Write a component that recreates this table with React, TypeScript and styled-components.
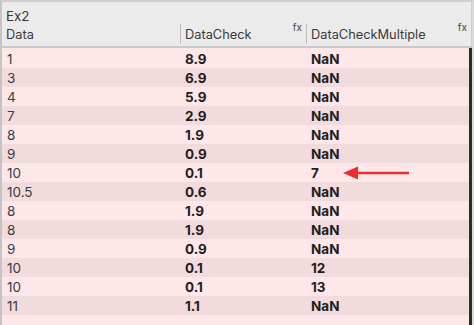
import { createGlobalStyle, styled } from 'styled-components';

const GlobalStyle = createGlobalStyle`
  body {
    margin: 0;
    background: #ffffff;
  }
`;

const rows: [string, string, string][] = [
  ['1', '8.9', 'NaN'],
  ['3', '6.9', 'NaN'],
  ['4', '5.9', 'NaN'],
  ['7', '2.9', 'NaN'],
  ['8', '1.9', 'NaN'],
  ['9', '0.9', 'NaN'],
  ['10', '0.1', '7'],
  ['10.5', '0.6', 'NaN'],
  ['8', '1.9', 'NaN'],
  ['8', '1.9', 'NaN'],
  ['9', '0.9', 'NaN'],
  ['10', '0.1', '12'],
  ['10', '0.1', '13'],
  ['11', '1.1', 'NaN'],
];

const App = () => {
  return (
    <>
      <GlobalStyle />
      <Frame>
        <Header>
          <TableTitle>Ex2</TableTitle>
          <HeaderRow>
            <HeadCell>
              <span>Data</span>
            </HeadCell>
            <HeadCell $divider>
              <span>DataCheck</span>
              <Fx>fx</Fx>
            </HeadCell>
            <HeadCell $divider>
              <span>DataCheckMultiple</span>
              <Fx>fx</Fx>
            </HeadCell>
          </HeaderRow>
        </Header>
        <Body>
          {rows.map((r, i) => (
            <Row key={i} $odd={i % 2 === 1}>
              <Cell>{r[0]}</Cell>
              <Cell $bold>{r[1]}</Cell>
              <Cell $bold>
                {r[2]}
                {i === 6 && (
                  <Arrow width='66' height='14' viewBox='0 0 66 14'>
                    <path d='M0 7 L15 0.5 L15 13.5 Z' fill='#e8302c' />
                    <line x1='12' y1='7' x2='66' y2='7' stroke='#e8302c' strokeWidth='2.4' />
                  </Arrow>
                )}
              </Cell>
            </Row>
          ))}
        </Body>
      </Frame>
    </>
  );
};

export default App;

const Frame = styled.div`
  width: 474px;
  height: 325px;
  box-sizing: border-box;
  overflow: hidden;
  display: flex;
  flex-direction: column;
  border-top: 2px solid #cfcfcf;
  border-left: 2px solid #c4c4c4;
  border-right: 2px solid #dadada;
  font-family: Inter, 'Noto Sans', sans-serif;
  color: #333;
`;

const Header = styled.div`
  background: #ebebeb;
  border-bottom: 2px solid #c8c8c8;
  border-right: 1px solid #cdcdcd;
`;

const TableTitle = styled.div`
  padding: 6px 4px 0;
  height: 16px;
  line-height: 16px;
  font-size: 13.4px;
  color: #383838;
`;

const HeaderRow = styled.div`
  display: grid;
  grid-template-columns: 178px 126px 1fr;
  padding: 0 0 2px;
  height: 20px;
`;

const HeadCell = styled.div<{ $divider?: boolean }>`
  display: flex;
  justify-content: space-between;
  align-items: center;
  padding: 0 4px;
  font-size: 12.8px;
  color: #3a3a3a;
  border-left: ${(p) => (p.$divider ? '1px solid #bcbcbc' : 'none')};
`;

const Fx = styled.span`
  align-self: flex-start;
  margin-top: -3px;
  font-size: 10px;
  color: #444;
`;

const Body = styled.div`
  flex: 1;
  padding-top: 1px;
  background: #fde7e8;
  border-right: 3px solid #2b2b2b;
`;

const Row = styled.div<{ $odd: boolean }>`
  display: grid;
  grid-template-columns: 178px 126px 1fr;
  height: 19px;
  align-items: center;
  background: ${(p) => (p.$odd ? '#f2dbdc' : '#fde7e8')};
`;

const Cell = styled.div<{ $bold?: boolean }>`
  position: relative;
  padding-left: ${(p) => (p.$bold ? '5px' : '5px')};
  font-size: 13.5px;
  font-weight: ${(p) => (p.$bold ? 700 : 400)};
  color: ${(p) => (p.$bold ? '#1e1e1e' : '#3c3c3c')};
`;

const Arrow = styled.svg`
  position: absolute;
  left: 37px;
  top: 50%;
  margin-top: -7px;
`;
